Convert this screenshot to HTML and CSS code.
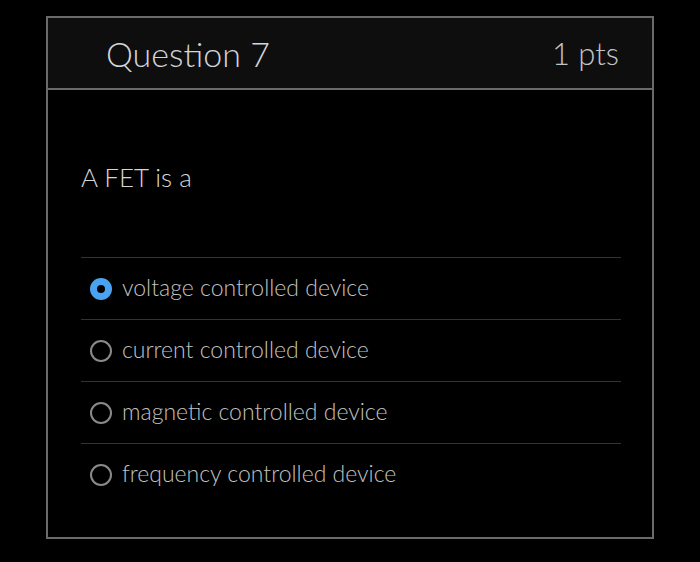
FILE: index.html
```html
<!DOCTYPE html>
<html>
<head>
<meta charset="utf-8">
<link rel="stylesheet" href="styles.css">
</head>
<body>
<div class="card">
  <div class="header">
    <div class="title">Question 7</div>
    <div class="pts">1 pts</div>
  </div>
  <div class="content">
    <div class="question">A FET is a</div>
    <div class="options">
      <div class="option"><span class="radio checked"></span><span class="label">voltage controlled device</span></div>
      <div class="option"><span class="radio"></span><span class="label">current controlled device</span></div>
      <div class="option"><span class="radio"></span><span class="label">magnetic controlled device</span></div>
      <div class="option"><span class="radio"></span><span class="label">frequency controlled device</span></div>
    </div>
  </div>
</div>
</body>
</html>
```
FILE: styles.css
```css
html, body {
  margin: 0;
  background: #000;
  font-family: Lato, "Open Sans", sans-serif;
}
.card {
  box-sizing: border-box;
  width: 608px;
  height: 523px;
  margin: 16px 0 0 46px;
  border: 2px solid #6a6a6a;
}
.header {
  height: 72px;
  box-sizing: border-box;
  display: flex;
  align-items: center;
  justify-content: space-between;
  padding: 0 33px 0 58px;
  background: #0e0e0e;
  border-bottom: 2px solid #6a6a6a;
}
.title {
  font-size: 34px;
  color: #d2d5d9;
  font-weight: 300;
}
.pts {
  font-size: 31px;
  color: #c4c4c4;
  font-weight: 300;
}
.content {
  padding: 72px 31px 0 33px;
}
.question {
  font-size: 26px;
  line-height: 30px;
  color: #d6d6d6;
  font-weight: 300;
}
.options {
  margin-top: 65px;
}
.option {
  height: 62px;
  box-sizing: border-box;
  border-top: 1px solid #333;
  display: flex;
  align-items: center;
  padding-left: 9px;
  padding-bottom: 4px;
}
.radio {
  box-sizing: border-box;
  width: 22px;
  height: 22px;
  border-radius: 50%;
  border: 2px solid #8a8a8a;
  margin-right: 10px;
  margin-top: 4px;
  flex-shrink: 0;
}
.radio.checked {
  border: 7px solid #4aa3f0;
  background: #000;
}
.label {
  font-size: 23px;
  color: #c2c2c2;
  font-weight: 300;
}
```
